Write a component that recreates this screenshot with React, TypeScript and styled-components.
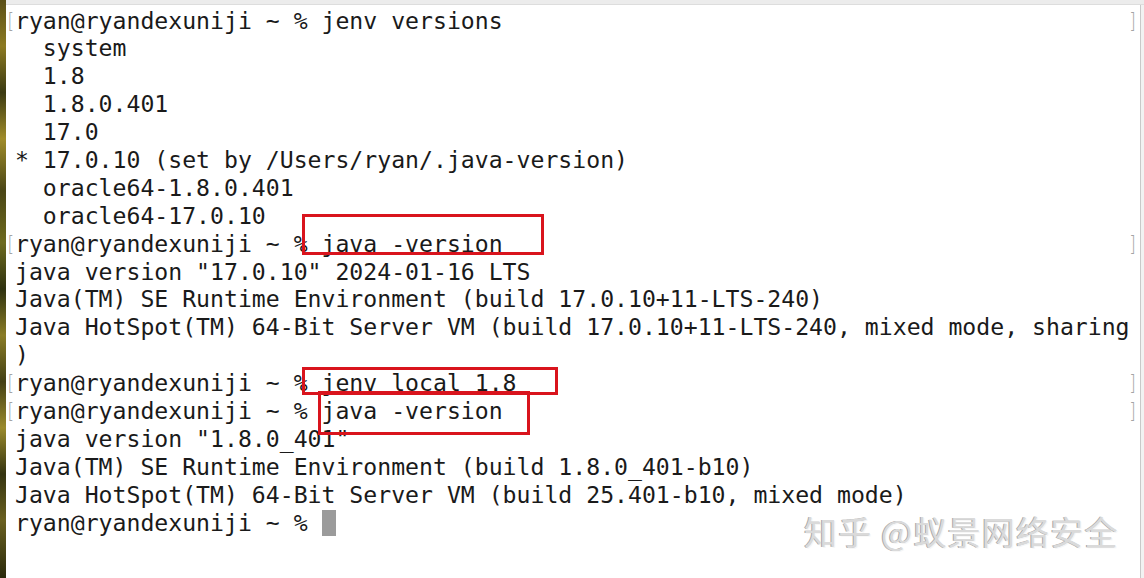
import React from "react";
import styled, { createGlobalStyle } from "styled-components";

const Global = createGlobalStyle`
  html, body { margin: 0; padding: 0; background: #ffffff; }
  body { overflow: hidden; }
`;

const Page = styled.div`
  position: relative;
  width: 1144px;
  height: 578px;
  display: flex;
  flex-direction: row;
  overflow: hidden;
  background: #ffffff;
`;

const Wallpaper = styled.div`
  width: 6px;
  flex: 0 0 6px;
  background: linear-gradient(
    180deg,
    #5a4f18 0%,
    #8c7a22 8%,
    #3b3a12 16%,
    #a08c2a 24%,
    #4a4616 33%,
    #6e6a1e 42%,
    #2f3210 50%,
    #8a7c26 58%,
    #444014 66%,
    #9a8a2c 74%,
    #353410 82%,
    #6a6020 90%,
    #2a2a0c 100%
  );
`;

const Window = styled.div`
  flex: 1;
  display: flex;
  flex-direction: column;
  min-width: 0;
`;

const TitleEdge = styled.div`
  height: 4px;
  flex: 0 0 4px;
  background: #ececec;
  border-bottom: 1px solid #dddddd;
`;

const Body = styled.div`
  flex: 1;
  display: flex;
  flex-direction: row;
  min-height: 0;
`;

const Terminal = styled.div`
  flex: 1;
  min-width: 0;
  padding-top: 2.5px;
  display: flex;
  flex-direction: column;
  font-family: "DejaVu Sans Mono", "Liberation Mono", monospace;
  font-size: 23.15px;
  line-height: 27.9px;
  color: #1a1a1a;
`;

const Row = styled.div`
  display: grid;
  grid-template-columns: 9px minmax(0, 1fr) 12px;
  height: 27.9px;
  white-space: pre;
`;

const Mark = styled.span<{ $side: "left" | "right" }>`
  font-family: "DejaVu Sans", "Liberation Sans", sans-serif;
  font-size: 21px;
  font-weight: 300;
  color: #a4a4a4;
  text-align: ${(p) => (p.$side === "left" ? "right" : "left")};
  line-height: 27.9px;
  transform: scaleX(0.8);
`;

const Text = styled.span`
  overflow: visible;
`;

const Cursor = styled.span`
  display: inline-block;
  width: 14px;
  height: 26px;
  background: #9b9b9b;
  vertical-align: -5px;
`;

const Scrollbar = styled.div`
  width: 3px;
  flex: 0 0 3px;
  background: #f2f2f2;
  border-left: 1px solid #c9c9c9;
`;

const Annotation = styled.div<{ $x: number; $y: number; $w: number; $h: number }>`
  position: absolute;
  left: ${(p) => p.$x}px;
  top: ${(p) => p.$y}px;
  width: ${(p) => p.$w}px;
  height: ${(p) => p.$h}px;
  box-sizing: border-box;
  border: 3px solid #d9141d;
`;

const Watermark = styled.div`
  position: absolute;
  left: 804px;
  top: 509px;
  font-family: "Noto Sans CJK SC", "Noto Sans", sans-serif;
  font-size: 33px;
  line-height: 44px;
  letter-spacing: 1.2px;
  color: #dadada;
  text-shadow: -1px 0 0 #a8a8a8, 1px 1px 0 #f6f6f6;
  white-space: pre;
`;

type Line = { t: string; mark?: boolean; cursor?: boolean };

const lines: Line[] = [
  { t: "ryan@ryandexuniji ~ % jenv versions", mark: true },
  { t: "  system" },
  { t: "  1.8" },
  { t: "  1.8.0.401" },
  { t: "  17.0" },
  { t: "* 17.0.10 (set by /Users/ryan/.java-version)" },
  { t: "  oracle64-1.8.0.401" },
  { t: "  oracle64-17.0.10" },
  { t: "ryan@ryandexuniji ~ % java -version", mark: true },
  { t: 'java version "17.0.10" 2024-01-16 LTS' },
  { t: "Java(TM) SE Runtime Environment (build 17.0.10+11-LTS-240)" },
  { t: "Java HotSpot(TM) 64-Bit Server VM (build 17.0.10+11-LTS-240, mixed mode, sharing" },
  { t: ")" },
  { t: "ryan@ryandexuniji ~ % jenv local 1.8", mark: true },
  { t: "ryan@ryandexuniji ~ % java -version", mark: true },
  { t: 'java version "1.8.0_401"' },
  { t: "Java(TM) SE Runtime Environment (build 1.8.0_401-b10)" },
  { t: "Java HotSpot(TM) 64-Bit Server VM (build 25.401-b10, mixed mode)" },
  { t: "ryan@ryandexuniji ~ % ", cursor: true },
];

export default function App() {
  return (
    <>
      <Global />
      <Page>
        <Wallpaper />
        <Window>
          <TitleEdge />
          <Body>
            <Terminal>
              {lines.map((l, i) => (
                <Row key={i}>
                  <Mark $side="left">{l.mark ? "[" : ""}</Mark>
                  <Text>
                    {l.t}
                    {l.cursor ? <Cursor /> : null}
                  </Text>
                  <Mark $side="right">{l.mark ? "]" : ""}</Mark>
                </Row>
              ))}
            </Terminal>
            <Scrollbar />
          </Body>
        </Window>
        <Annotation $x={302} $y={214} $w={242} $h={41} />
        <Annotation $x={302} $y={367} $w={256} $h={28} />
        <Annotation $x={318} $y={391} $w={212} $h={44} />
        <Watermark>知乎 @蚁景网络安全</Watermark>
      </Page>
    </>
  );
}
